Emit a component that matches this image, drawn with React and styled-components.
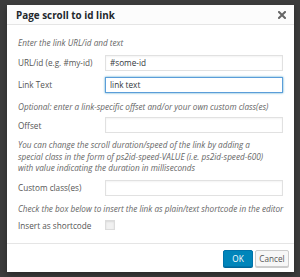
import React from 'react';
import styled, { createGlobalStyle } from 'styled-components';

const GlobalStyle = createGlobalStyle`
  html, body {
    margin: 0;
    padding: 0;
    background: #3c3c3c;
  }
  body {
    font-family: "Open Sans", "Liberation Sans", sans-serif;
    width: 300px;
    height: 277px;
    overflow: hidden;
  }
`;

const Screen = styled.div`
  width: 300px;
  height: 277px;
  padding: 5px 6px 0 7px;
  box-sizing: border-box;
`;

const Dialog = styled.div`
  width: 287px;
  height: 267px;
  background: #fff;
  box-shadow: 0 3px 6px rgba(0, 0, 0, 0.3);
  display: flex;
  flex-direction: column;
`;

const Header = styled.div`
  height: 20px;
  box-sizing: border-box;
  background: #fcfcfc;
  border-bottom: 1px solid #e5e5e5;
  display: flex;
  align-items: center;
  justify-content: space-between;
  padding: 0 7px 0 9px;
`;

const Title = styled.div`
  font-size: 9.9px;
  font-weight: 700;
  color: #23282d;
`;

const Close = styled.div`
  width: 10px;
  height: 10px;
  display: flex;
  align-items: center;
  justify-content: center;
`;

const Body = styled.div`
  padding: 12px 11px 0 11px;
  display: flex;
  flex-direction: column;
`;

const Note = styled.div`
  font-size: 8.2px;
  line-height: 11.5px;
  font-style: italic;
  color: #666;
  white-space: nowrap;
  margin-top: ${(p) => p.$mt || 0}px;
`;

const Row = styled.div`
  display: grid;
  grid-template-columns: 87px 1fr;
  align-items: center;
  height: ${(p) => p.$h || 16}px;
  margin-top: ${(p) => p.$mt || 0}px;
`;

const Label = styled.div`
  font-size: 8.2px;
  color: #555;
`;

const Input = styled.div`
  height: 16px;
  box-sizing: border-box;
  border: 1px solid ${(p) => (p.$focus ? '#5b9dd9' : '#e1e1e1')};
  box-shadow: ${(p) =>
    p.$focus ? '0 0 2px rgba(30,140,190,0.8)' : 'inset 0 1px 2px rgba(0,0,0,0.05)'};
  font-size: 8.2px;
  color: #32373c;
  display: flex;
  align-items: center;
  padding: 0 4px;
`;

const Check = styled.div`
  width: 10px;
  height: 10px;
  box-sizing: border-box;
  border: 1px solid #dcdcdc;
  background: #f1f1f1;
  box-shadow: inset 0 1px 2px rgba(0, 0, 0, 0.1);
`;

const Footer = styled.div`
  margin-top: auto;
  height: 29px;
  box-sizing: border-box;
  border-top: 1px solid #e5e5e5;
  display: flex;
  justify-content: flex-end;
  align-items: flex-start;
  gap: 2px;
  padding: 6px 5px 0 0;
`;

const Button = styled.div`
  height: 17px;
  box-sizing: border-box;
  border-radius: 2px;
  font-size: 8.2px;
  display: flex;
  align-items: center;
  justify-content: center;
  width: ${(p) => p.$w}px;
  background: ${(p) => (p.$primary ? '#0085ba' : '#f7f7f7')};
  color: ${(p) => (p.$primary ? '#fff' : '#555')};
  border: 1px solid ${(p) => (p.$primary ? '#0073aa' : '#ccc')};
  box-shadow: 0 1px 0 ${(p) => (p.$primary ? '#006799' : '#ccc')};
`;

export default function App() {
  return (
    <Screen>
      <GlobalStyle />
      <Dialog>
        <Header>
          <Title>Page scroll to id link</Title>
          <Close>
            <svg width="8" height="8" viewBox="0 0 8 8">
              <path d="M1 1L7 7M7 1L1 7" stroke="#666" strokeWidth="2" strokeLinecap="square" />
            </svg>
          </Close>
        </Header>
        <Body>
          <Note>Enter the link URL/id and text</Note>
          <Row $mt={6}>
            <Label>URL/id (e.g. #my-id)</Label>
            <Input>#some-id</Input>
          </Row>
          <Row $mt={6}>
            <Label>Link Text</Label>
            <Input $focus>link text</Input>
          </Row>
          <Note $mt={8}>Optional: enter a link-specific offset and/or your own custom class(es)</Note>
          <Row $mt={5}>
            <Label>Offset</Label>
            <Input />
          </Row>
          <Note $mt={6}>
            You can change the scroll duration/speed of the link by adding a
            <br />
            special class in the form of ps2id-speed-VALUE (i.e. ps2id-speed-600)
            <br />
            with value indicating the duration in milliseconds
          </Note>
          <Row $mt={6}>
            <Label>Custom class(es)</Label>
            <Input />
          </Row>
          <Note $mt={7}>Check the box below to insert the link as plain/text shortcode in the editor</Note>
          <Row $mt={4} $h={14}>
            <Label>Insert as shortcode</Label>
            <Check />
          </Row>
        </Body>
        <Footer>
          <Button $primary $w={30}>OK</Button>
          <Button $w={34}>Cancel</Button>
        </Footer>
      </Dialog>
    </Screen>
  );
}
